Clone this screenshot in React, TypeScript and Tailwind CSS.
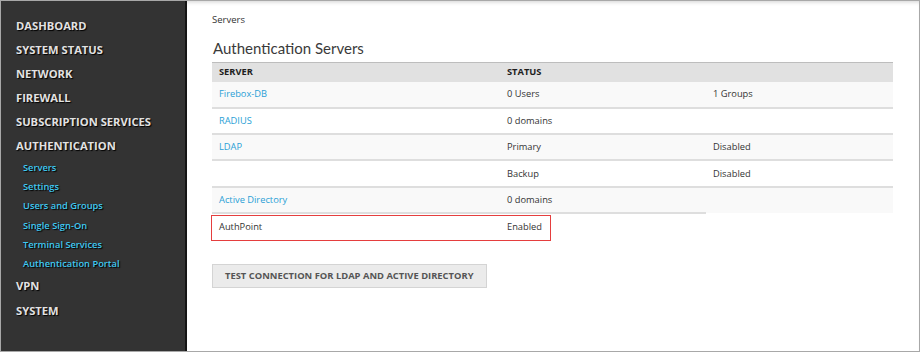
import React from "react";

interface ServerRow {
  name: string
  link: boolean
  status: string
  extra?: string
  shaded: boolean
  noThird?: boolean
}

const MENU_TOP = ["DASHBOARD", "SYSTEM STATUS", "NETWORK", "FIREWALL", "SUBSCRIPTION SERVICES", "AUTHENTICATION"];
const AUTH_ITEMS = ["Servers", "Settings", "Users and Groups", "Single Sign-On", "Terminal Services", "Authentication Portal"];

const ROWS: ServerRow[] = [
  {name: "Firebox-DB", link: true, status: "0 Users", extra: "1 Groups", shaded: true},
  {name: "RADIUS", link: true, status: "0 domains", extra: "", shaded: false},
  {name: "LDAP", link: true, status: "Primary", extra: "Disabled", shaded: true},
  {name: "", link: false, status: "Backup", extra: "Disabled", shaded: false},
  {name: "Active Directory", link: true, status: "0 domains", extra: "", shaded: true},
  {name: "AuthPoint", link: false, status: "Enabled", shaded: false, noThird: true},
];

function MenuHeading({label, tall}: { label: string, tall?: boolean }) {
  return (
    <div className={`${tall ? "h-[25px] leading-[25px]" : "h-[24px] leading-[24px]"} pl-[15px] text-[11.2px] font-bold text-[#e2e2e2] [text-shadow:1px_1px_1px_#000]`}>
      {label}
    </div>
  )
}

export default function App() {
  return (
    <div
      className="w-[920px] h-[352px] flex border border-[#a8a8a8] bg-white overflow-hidden"
      style={{fontFamily: '"Open Sans", "Liberation Sans", sans-serif'}}
    >
      {/* side navigation */}
      <div className="w-[186px] shrink-0 h-full bg-[#333333] border-r-2 border-[#141414] pt-[13px]">
        {MENU_TOP.map((m) => <MenuHeading key={m} label={m}/>)}
        <div className="pl-[22px]">
          {AUTH_ITEMS.map((item) => (
            <div key={item} className="h-[19.2px] leading-[19.2px] text-[9.3px] font-semibold text-[#3fc9f2] [text-shadow:1px_1px_1px_#000]">
              {item}
            </div>
          ))}
        </div>
        <MenuHeading label="VPN" tall/>
        <MenuHeading label="SYSTEM" tall/>
      </div>

      {/* main area */}
      <div className="flex-1 h-full pl-[25px] pr-[25px] pt-[12px] shadow-[inset_0_4px_4px_-3px_rgba(0,0,0,0.18)]">
        <div className="text-[9.5px] leading-[14px] text-[#333]">Servers</div>
        <div
          className="mt-[11px] pl-[1px] text-[15px] leading-[20px] text-[#3a3a3a]"
          style={{fontFamily: 'Lato, "Open Sans", sans-serif'}}
        >
          Authentication Servers
        </div>

        <div className="relative mt-[4px] w-[681px]">
          <table className="table-fixed w-full border-collapse text-[9.3px] text-[#333]">
            <colgroup>
              <col className="w-[288px]"/>
              <col className="w-[206px]"/>
              <col className="w-[187px]"/>
            </colgroup>
            <thead>
            <tr className="bg-[#e1e1e1] border-t border-[#bdbdbd]">
              <th className="h-[19px] px-[7px] text-left font-bold text-[#1e1e1e]">SERVER</th>
              <th className="h-[19px] px-[7px] text-left font-bold text-[#1e1e1e]">STATUS</th>
              <th className="h-[19px] px-[7px]"></th>
            </tr>
            </thead>
            <tbody>
            {ROWS.map((row, i) => (
              <tr key={i} className={row.shaded ? "bg-[#f9f9f9]" : ""}>
                <td className={`px-[7px] ${i === 0 ? "h-[26px]" : "h-[26.4px] border-t-2 border-[#dedede]"}`}>
                  {row.link ? <span className="text-[#2a9fd6]">{row.name}</span> : row.name}
                </td>
                <td className={`px-[7px] ${i === 0 ? "" : "border-t-2 border-[#dedede]"}`}>{row.status}</td>
                {!row.noThird && (
                  <td className={`px-[7px] ${i === 0 ? "" : "border-t-2 border-[#dedede]"}`}>{row.extra}</td>
                )}
              </tr>
            ))}
            </tbody>
          </table>

          {/* highlight round the AuthPoint row */}
          <div className="absolute left-[-1px] top-[153px] w-[340px] h-[26px] border border-[#e53e3e] pointer-events-none"/>
        </div>

        <button
          className="mt-[25px] h-[24px] px-[12px] bg-[#ebebeb] border border-[#d4d4d4] text-[9.4px] font-bold text-[#555]"
        >
          TEST CONNECTION FOR LDAP AND ACTIVE DIRECTORY
        </button>
      </div>
    </div>
  )
}
